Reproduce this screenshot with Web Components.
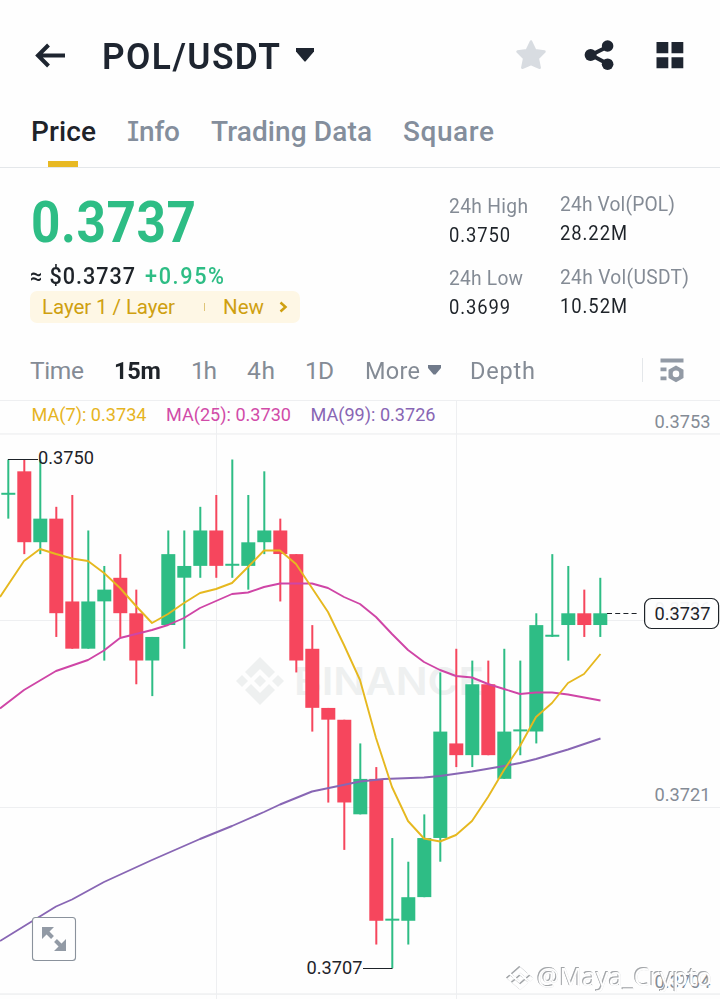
<!DOCTYPE html>
<html lang="en">
<head>
<meta charset="utf-8">
<title>POL/USDT</title>
<style>
  body {
    margin: 0;
    width: 720px;
    height: 999px;
    overflow: hidden;
    background: #fefefe;
    color: #1e2329;
    font-family: Roboto, "Noto Sans", sans-serif;
  }
</style>
</head>
<body>
<market-page>
  <pair-header slot="header">POL/USDT</pair-header>
  <tab-bar slot="tabs"></tab-bar>
  <price-summary slot="summary"></price-summary>
  <interval-bar slot="intervals"></interval-bar>
  <candle-chart slot="chart"></candle-chart>
</market-page>

<script>
/**
 * BASE
 * */

class BaseElement extends HTMLElement {
  constructor() {
    super();
    const template = document.createElement("template");
    template.innerHTML = this.render();
    this.attachShadow({ mode: "open" }).appendChild(template.content.cloneNode(true));
  }
}

/**
 * PAGE
 * */

class MarketPage extends BaseElement {
  render() {
    return `
      <style>
        :host { display: flex; flex-direction: column; height: 999px; }
      </style>
      <slot name="header"></slot>
      <slot name="tabs"></slot>
      <slot name="summary"></slot>
      <slot name="intervals"></slot>
      <slot name="chart"></slot>
    `;
  }
}

/**
 * HEADER
 * */

class PairHeader extends BaseElement {
  render() {
    return `
      <style>
        :host { display: flex; align-items: center; height: 112px; padding: 0 36px 0 34px; box-sizing: border-box; color: #1e2530; }
        svg { display: block; }
        .back { margin-top: -1px; }
        fit-text { font-size: 36px; font-weight: 600; line-height: 40px; margin: 2px 0 0 36px; }
        .caret { margin: -3px 0 0 16px; }
        .actions { display: flex; align-items: center; margin: -2px 0 0 auto; }
        .star { margin-right: 37px; }
        .share { margin-right: 36px; }
      </style>
      <svg class="back" width="32" height="28" viewBox="0 0 32 28" fill="none" stroke="#1e2530" stroke-width="4">
        <path d="M31 13.5H4M14.5 3L4 13.5L14.5 24"/>
      </svg>
      <fit-text width="178" squeeze="0.98"><slot></slot></fit-text>
      <svg class="caret" width="18" height="14" viewBox="0 0 18 14"><path d="M0 0H18V3.5L9.5 13.5H8.5L0 3.5Z" fill="#1e2530"/></svg>
      <div class="actions">
        <svg class="star" width="32" height="32" viewBox="0 0 32 32">
          <path d="M16 2.5L20.2 11.3L29.5 12.6L22.8 19.3L24.7 28.8L16 25L7.3 28.8L9.2 19.3L2.5 12.6L11.8 11.3Z" fill="#d8dce1" stroke="#d8dce1" stroke-width="2.5" stroke-linejoin="round"/>
        </svg>
        <svg class="share" width="32" height="32" viewBox="0 0 32 32" fill="#1e2530">
          <path d="M7 16L24 7.5M7 16L24 25" stroke="#1e2530" stroke-width="4"/>
          <circle cx="6.6" cy="16" r="6"/><circle cx="23.6" cy="7" r="5.8"/><circle cx="23.6" cy="25.2" r="5.8"/>
        </svg>
        <svg width="32" height="32" viewBox="0 0 32 32" fill="#1e2530">
          <path d="M4.5 3H16.3V14.3H4.5ZM19.5 3H31.3V14.3H19.5ZM4.5 18.3H16.3V29.3H4.5ZM19.5 18.3H31.3V29.3H19.5Z"/>
        </svg>
      </div>
    `;
  }
}

/**
 * TABS
 * */

class TabBar extends BaseElement {
  render() {
    return `
      <style>
        :host { display: flex; height: 56px; padding-left: 31px; box-sizing: border-box; border-bottom: 1px solid #e4e7ea; gap: 31px; }
        .tab { display: flex; flex-direction: column; align-items: center; justify-content: space-between; color: #848e9c; font-size: 28px; font-weight: 500; line-height: 39px; }
        .tab.active { color: #1e2329; }
        .active::after { content: ""; width: 30px; height: 6px; margin-right: 2px; background: #e8b923; }
        .serif { font-family: Inter; font-feature-settings: "cv08", "ss02"; font-size: 27px; }
      </style>
      <div class="tab active"><fit-text width="65">Price</fit-text></div>
      <div class="tab"><fit-text width="53"><span class="serif">I</span>nfo</fit-text></div>
      <div class="tab"><fit-text width="161">Trading Data</fit-text></div>
      <div class="tab"><fit-text width="91">Square</fit-text></div>
    `;
  }
}

/**
 * PRICE SUMMARY
 * */

class StatItem extends BaseElement {
  render() {
    return `
      <style>
        :host { display: flex; flex-direction: column; font-size: 20px; line-height: 28px; }
        .label { color: #848b95; margin-top: -1px; margin-bottom: 1px; }
      </style>
      <fit-text class="label" width="${this.getAttribute("label-width")}" squeeze="0.96">${this.getAttribute("label")}</fit-text>
      <slot></slot>
    `;
  }
}

class PriceSummary extends BaseElement {
  render() {
    return `
      <style>
        :host { display: flex; height: 172px; padding: 22px 0 0 30px; box-sizing: border-box; }
        .left { width: 419px; display: flex; flex-direction: column; align-items: flex-start; }
        .last { font-size: 57px; font-weight: 700; line-height: 64px; color: #2ebd85; margin: 1px 0 0 1px; }
        .sub { display: flex; gap: 10px; font-size: 23px; font-weight: 500; line-height: 30px; margin-top: 7px; }
        .up { color: #2ebd85; }
        .tag { display: flex; align-items: center; box-sizing: border-box; width: 270px; height: 32px; margin-top: -1px; padding-left: 12px; border-radius: 7px; background: #fef7e5; color: #cfa010; font-size: 20.5px; }
        .sep { width: 1px; height: 8px; background: #dfc579; margin: 0 18px 0 29px; }
        .tag svg { margin-left: 14px; }
        .col { display: flex; flex-direction: column; width: 111px; padding-top: 1px; }
        .col.first { padding-top: 3px; }
        stat-item + stat-item { margin-top: 17px; }
        .first stat-item + stat-item { margin-top: 16px; }
      </style>
      <div class="left">
        <fit-text class="last" width="165" squeeze="0.9">0.3737</fit-text>
        <div class="sub">
          <fit-text width="105" squeeze="0.94">≈ $0.3737</fit-text>
          <fit-text class="up" width="79" squeeze="0.94">+0.95%</fit-text>
        </div>
        <div class="tag">
          <fit-text width="133">Layer 1 / Layer</fit-text>
          <span class="sep"></span>
          <fit-text width="41">New</fit-text>
          <svg width="12" height="14" viewBox="0 0 12 14" fill="none" stroke="#cfa010" stroke-width="2.5"><path d="M2.5 2.5L7.5 7L2.5 11.5"/></svg>
        </div>
      </div>
      <div class="col first">
        <stat-item label="24h High" label-width="79"><fit-text width="61" squeeze="0.92">0.3750</fit-text></stat-item>
        <stat-item label="24h Low" label-width="74"><fit-text width="61" squeeze="0.92">0.3699</fit-text></stat-item>
      </div>
      <div class="col">
        <stat-item label="24h Vol(POL)" label-width="115"><fit-text width="67" squeeze="0.92">28.22M</fit-text></stat-item>
        <stat-item label="24h Vol(USDT)" label-width="129"><fit-text width="67" squeeze="0.92">10.52M</fit-text></stat-item>
      </div>
    `;
  }
}

/**
 * INTERVALS
 * */

class IntervalBar extends BaseElement {
  render() {
    return `
      <style>
        :host { display: flex; align-items: center; height: 60px; padding: 2px 35px 0 30px; box-sizing: border-box; color: #848b95; font-size: 24.5px; line-height: 30px; }
        .active { color: #1e2329; font-weight: 700; margin: 0 30px; }
        .gap { margin-left: 30px; }
        .more { margin-left: 31px; }
        .caret { margin: -3px 29px 0 8px; }
        .settings { margin: -3px 0 0 auto; display: flex; align-items: center; gap: 16px; }
        .rule { width: 1px; height: 24px; background: #e4e7ea; }
      </style>
      <fit-text width="54">Time</fit-text>
      <fit-text class="active" width="47" squeeze="0.96">15m</fit-text>
      <fit-text width="26">1h</fit-text>
      <fit-text class="gap" width="28">4h</fit-text>
      <fit-text class="gap" width="29">1D</fit-text>
      <fit-text class="more" width="55" squeeze="0.96">More</fit-text>
      <svg class="caret" width="13" height="10" viewBox="0 0 13 10"><path d="M0 0H13V3L7.5 9.5H5.5L0 3Z" fill="#707a8a"/></svg>
      <fit-text width="65" squeeze="0.96">Depth</fit-text>
      <div class="settings">
        <span class="rule"></span>
        <svg width="26" height="26" viewBox="0 0 26 26" fill="#929aa5">
          <path d="M1.5 1.5H24.5V5.5H1.5ZM1.5 10.5H7.5V14.3H1.5ZM1.5 19.5H7.5V23.3H1.5Z"/>
          <path fill-rule="evenodd" d="M17 8.5L24.5 12.7V21L17 25.2L9.5 21V12.7ZM17 13.6A3.3 3.3 0 1 0 17 20.2A3.3 3.3 0 1 0 17 13.6Z"/>
        </svg>
      </div>
    `;
  }
}

/**
 * CHART
 * */

const UP = "#2ebd85";
const DOWN = "#f6465d";

// [direction, high, body top, body bottom, low], in ticks below 0.3750
const CANDLES = [
  ["u", 0, 3, 3, 5], ["d", 0, 1, 7, 8], ["u", 0, 5, 7, 8], ["d", 4, 5, 13, 15],
  ["d", 3, 12, 16, 16], ["u", 6, 12, 16, 16], ["u", 9, 11, 12, 17], ["d", 8, 10, 13, 15],
  ["d", 11, 13, 17, 19], ["u", 15, 15, 17, 20], ["u", 6, 8, 14, 14], ["u", 6, 9, 10, 16],
  ["u", 4, 6, 9, 10], ["d", 3, 6, 9, 10], ["u", 0, 9, 9, 10], ["u", 3, 7, 9, 11],
  ["u", 1, 6, 7, 8], ["d", 5, 6, 8, 12], ["d", 8, 8, 17, 18], ["d", 14, 16, 21, 23],
  ["d", 21, 21, 22, 29], ["d", 22, 22, 29, 33], ["u", 24, 27, 30, 30], ["d", 26, 27, 39, 41],
  ["u", 32, 39, 39, 43], ["u", 34, 37, 39, 41], ["u", 30, 32, 37, 37], ["u", 18, 23, 32, 34],
  ["d", 16, 24, 25, 26], ["u", 17, 19, 25, 26], ["d", 17, 19, 25, 25], ["u", 16, 23, 27, 27],
  ["u", 17, 23, 23, 25], ["u", 13, 14, 23, 24], ["u", 8, 15, 15, 15], ["u", 9, 13, 14, 17],
  ["d", 11, 13, 14, 15], ["u", 10, 13, 14, 15],
];

const MA7 = "0,597 24,561 40,549 56,554 72,558.5 88,561 104,573 120,588 136,606 152,623 168,614 184,603 200,593 216,589 232,583 248,567 264,550.5 280,550.5 296,564 312,588 328,612 344,645 360,680 376,738 392,787 408,821 424,838.5 440,841.5 456,835 472,821 488,797 504,770 520,746 536,717 552,703 568,683 584,674 600.5,654";
const MA25 = "0,708.5 24,690 56,671 88,660 104,650.5 120,638 152,630 168,625 184,618 200,608 216,601 232,594 248,592.5 264,587 280,583.5 312,583.5 328,588 344,597 360,604 376,617 392,634 408,650 424,662 440,670 456,676 472,677.5 488,684 504,689 520,694 536,692.5 552,692.5 568,694.5 600.5,700.5";
const MA99 = "0,941 56,906.5 72,899.5 104,882 152,860 200,839 232,826 264,812 280,804.5 312,791.5 360,781.5 384,779 424,777.5 440,776 472,771.5 504,766 520,763 536,759 568,749.5 600.5,738.5";

const BINANCE_MARK = "M24 0L39 15L33 21L24 12L15 21L9 15ZM0 24L6 18L12 24L6 30ZM18 24L24 18L30 24L24 30ZM36 24L42 18L48 24L42 30ZM9 33L15 27L24 36L33 27L39 33L24 48Z";

function tickY(tick) {
  return 459.5 + tick * 11.83;
}

function candle([dir, high, top, bottom, low], i) {
  const x = 8.3 + i * 16;
  const color = dir === "u" ? UP : DOWN;
  const bodyY = top === bottom ? tickY(top) - 2.2 : tickY(top);
  const bodyH = top === bottom ? 2 : tickY(bottom) - tickY(top) - 0.1;
  return `
    <rect x="${x - 1}" y="${tickY(high)}" width="2" height="${tickY(low) - tickY(high)}" fill="${color}"/>
    <rect x="${x - 7}" y="${bodyY}" width="14" height="${bodyH}" fill="${color}"/>`;
}

// y is the middle of the digits
function label(text, x, y, width, color, size = 18.5) {
  return `<text x="${x}" y="${y + size * 0.325}" font-size="${size}" textLength="${width}" lengthAdjust="spacingAndGlyphs" fill="${color}">${text}</text>`;
}

class CandleChart extends BaseElement {
  render() {
    return `
      <style>
        :host { display: block; height: 599px; }
        svg { display: block; }
        text { font-family: Roboto, "Noto Sans", sans-serif; }
        .brand { font-family: Inter, sans-serif; font-weight: 600; }
        .author { fill: #fefefe; filter: drop-shadow(-0.6px -0.5px 0.4px #a2a5a8) drop-shadow(0.3px 0.4px 0.2px #d2d4d6); }
        .author text { font-family: "Noto Sans", sans-serif; font-size: 25px; }
      </style>
      <svg width="720" height="599" viewBox="0 400 720 599">
        <g fill="#eeeff1">
          <rect y="399.5" width="720" height="1.5"/>
          <rect y="433.3" width="720" height="1.3"/>
          <rect y="620" width="720" height="1"/>
          <rect y="807" width="720" height="1"/>
          <rect y="993.3" width="720" height="1.5"/>
          <rect x="216" y="400" width="1" height="599"/>
          <rect x="456" y="400" width="1" height="599"/>
        </g>

        <g fill="#eef0f0">
          <path d="${BINANCE_MARK}" transform="translate(236 657)"/>
          <text class="brand" x="294" y="695" font-size="38" textLength="190" lengthAdjust="spacingAndGlyphs">BINANCE</text>
        </g>

        ${label("MA(7): 0.3734", 31.5, 415, 115, "#e6b422")}
        ${label("MA(25): 0.3730", 166, 415, 125, "#d14ba8")}
        ${label("MA(99): 0.3726", 310.5, 415, 125, "#8866b4")}

        ${CANDLES.map(candle).join("")}

        <g fill="none" stroke-width="1.9" stroke-linejoin="round">
          <polyline points="${MA99}" stroke="#8866b4"/>
          <polyline points="${MA25}" stroke="#cf45a6"/>
          <polyline points="${MA7}" stroke="#e6b81f"/>
        </g>

        <path d="M8 459.5H38M363 968.5H392.5" stroke="#1e2329" stroke-width="1.2"/>
        ${label("0.3750", 38, 458, 56, "#1e2329")}
        ${label("0.3707", 306.5, 968, 56, "#1e2329")}

        ${label("0.3753", 654.5, 422, 56, "#848b95")}
        ${label("0.3721", 654.5, 795, 56, "#848b95")}
        ${label("0.3704", 654.5, 982, 56, "#848b95")}
        ${label("0.3736", 654.5, 608.5, 56, "#848b95")}

        <path d="M607 613.5H637" stroke="#1e2329" stroke-width="1.2" stroke-dasharray="5 3.2"/>
        <rect x="644.6" y="598.5" width="74" height="30" rx="7" fill="#fefefe" fill-opacity="0.9" stroke="#1e2329" stroke-width="1.2"/>
        ${label("0.3737", 654.5, 614, 56, "#1e2329")}

        <rect x="32.5" y="917.5" width="43" height="43" rx="3" fill="#fefefe" stroke="#8a929c" stroke-width="1.1"/>
        <path d="M42 927H54L42 939ZM66 951H54L66 939Z" fill="#929aa5"/>
        <path d="M46 931L52.5 937.5M55.5 940.5L62 947" stroke="#929aa5" stroke-width="4"/>

        <g class="author">
          <path d="${BINANCE_MARK}" transform="translate(507 967) scale(0.55 0.48)"/>
          <text x="537" y="985.5" textLength="175">@Maya_Crypto</text>
        </g>
      </svg>
    `;
  }
}

/**
 * FIT TEXT
 * spreads its letters over the given width, squeeze makes them narrower first
 * */

class FitText extends BaseElement {
  render() {
    return `
      <style>
        :host { display: block; flex: none; white-space: nowrap; }
        span { display: inline-block; transform-origin: left; }
      </style>
      <span><slot></slot></span>
    `;
  }
  connectedCallback() {
    const width = Number(this.getAttribute("width"));
    const squeeze = Number(this.getAttribute("squeeze") || 1);
    const slotted = this.querySelector("slot");
    const text = slotted ? slotted.assignedNodes()[0].textContent : this.textContent;
    const span = this.shadowRoot.querySelector("span");
    const natural = span.getBoundingClientRect().width;
    this.style.letterSpacing = `${(width / squeeze - natural) / (text.trim().length - 1)}px`;
    this.style.width = `${width}px`;
    if (squeeze !== 1) {
      span.style.transform = `scaleX(${squeeze})`;
    }
  }
}

customElements.define("market-page", MarketPage);
customElements.define("pair-header", PairHeader);
customElements.define("tab-bar", TabBar);
customElements.define("stat-item", StatItem);
customElements.define("price-summary", PriceSummary);
customElements.define("interval-bar", IntervalBar);
customElements.define("candle-chart", CandleChart);
customElements.define("fit-text", FitText);
</script>
</body>
</html>
